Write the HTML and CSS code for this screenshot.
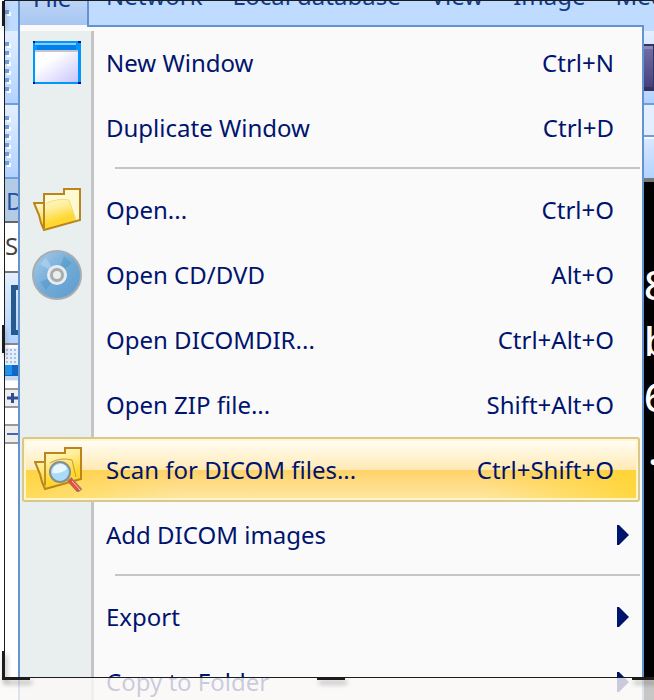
FILE: index.html
```html
<!DOCTYPE html>
<html lang="en">
<head>
<meta charset="utf-8">
<title>File menu</title>
<link rel="stylesheet" href="styles.css">
</head>
<body>
<div class="app">
  <nav class="menubar" aria-label="Main menu">
    <span class="grip grip-bar"></span>
    <button class="tab tab-open" type="button"><span>File</span></button>
    <div class="tabs">
      <button class="tab" type="button">Network</button>
      <button class="tab" type="button">Local database</button>
      <button class="tab" type="button">View</button>
      <button class="tab" type="button">Image</button>
      <button class="tab" type="button">Media</button>
    </div>
  </nav>
  <div class="workspace">
    <aside class="side">
      <div class="bar-end"></div>
      <div class="tool"><span class="grip"></span></div>
      <div class="tool"><span class="grip"></span></div>
      <div class="heading">D</div>
      <div class="search">S</div>
      <div class="device"><span></span></div>
      <div class="thumb">
        <svg width="13" height="33" viewBox="0 0 13 33"><rect width="13" height="33" fill="#e6effc"/><path d="M1 2h11M1 6h11M1 10h11M1 14h11" stroke="#a9bfe8" stroke-width="2" stroke-dasharray="2 2"/><rect y="17" width="13" height="13" fill="#1266c4"/><path d="M0 17h7v10H0z" fill="#1e90ee"/><path d="M0 30h13" stroke="#c6d8ef" stroke-width="4"/></svg>
      </div>
      <div class="node"><svg width="13" height="16" viewBox="0 0 13 16"><path d="M2 8h11M7.500 3v10" stroke="#2f4b94" stroke-width="3"/></svg></div>
      <div class="node"><svg width="13" height="16" viewBox="0 0 13 16"><path d="M2 8h11" stroke="#4565ad" stroke-width="2"/></svg></div>
    </aside>
    <div class="menu" role="menu">
      <button class="item" type="button" role="menuitem">
        <span class="icon"><svg width="48" height="43" viewBox="0 0 48 43"><defs><linearGradient id="win" x1="0" y1="0" x2="1" y2="1"><stop offset=".3" stop-color="#fff"/><stop offset="1" stop-color="#c9c5fb"/></linearGradient></defs><rect width="48" height="43" fill="#0096ff"/><path d="M2 2h41v2H2z" fill="#8ccdff"/><path d="M4 4h39v5H4z" fill="#0080ea"/><path d="M2 9h43v2H2z" fill="#c6c3cf"/><path d="M2 11h43v30H2z" fill="url(#win)"/><path d="M0 0h2v2H0zM45 0h3v2h-3zM0 41h2v2H0zM45 41h3v2h-3z" fill="#001883"/></svg></span>
        <span class="label">New Window</span><kbd>Ctrl+N</kbd>
      </button>
      <button class="item" type="button" role="menuitem"><span class="icon"></span><span class="label">Duplicate Window</span><kbd>Ctrl+D</kbd></button>
      <hr>
      <button class="item" type="button" role="menuitem">
        <span class="icon"><svg width="48" height="43" viewBox="0 0 48 43"><defs><linearGradient id="gold" x1="0" y1="0" x2=".4" y2="1"><stop offset="0" stop-color="#fffde5"/><stop offset=".4" stop-color="#ffee9c"/><stop offset=".8" stop-color="#ffd72e"/></linearGradient></defs><path d="M11 36V6h20V1h16v31L11 42z" fill="#fff9d2"/><path d="M1 15h10l1-1Q26 10 36 12l7 20-32 10L8 35 6 27z" fill="url(#gold)"/><path d="M11 40V6h20V1h16v31L11 42 8 35 6 27 1 15h10" fill="none" stroke="#b9851c" stroke-width="2"/><path d="M14 15q11-5 22-3l7 20" fill="none" stroke="#f4dd78" stroke-width="1"/></svg></span>
        <span class="label">Open...</span><kbd>Ctrl+O</kbd>
      </button>
      <button class="item" type="button" role="menuitem">
        <span class="icon"><svg width="52" height="52" viewBox="0 0 52 52"><defs><linearGradient id="disc" x1="0" y1="0" x2="1" y2="1"><stop offset="0" stop-color="#a9cdec"/><stop offset=".5" stop-color="#72acd8"/><stop offset="1" stop-color="#5b9bcc"/></linearGradient></defs><circle cx="26" cy="26" r="24" fill="url(#disc)" stroke="#a8adb1" stroke-width="2"/><path d="M26 26L33 7l8 7zM26 26L9 33l6 8z" fill="#498dbe" opacity=".4"/><path d="M26 26L9 15l6-6z" fill="#d6eafa" opacity=".35"/><circle cx="26" cy="26" r="9" fill="#dfe7ec" stroke="#e9eef0" stroke-width="2"/><circle cx="26" cy="26" r="5.500" fill="#e8eeee" stroke="#a9abad" stroke-width="3"/></svg></span>
        <span class="label">Open CD/DVD</span><kbd>Alt+O</kbd>
      </button>
      <button class="item" type="button" role="menuitem"><span class="icon"></span><span class="label">Open DICOMDIR...</span><kbd>Ctrl+Alt+O</kbd></button>
      <button class="item" type="button" role="menuitem"><span class="icon"></span><span class="label">Open ZIP file...</span><kbd>Shift+Alt+O</kbd></button>
      <button class="item item-active" type="button" role="menuitem">
        <span class="icon"><svg width="48" height="45" viewBox="0 0 48 45"><path d="M11 38V6h20V1h16v31L11 42 8 35 6 27 1 15h10" fill="url(#gold)" stroke="#b9851c" stroke-width="2"/><path d="M11 14v27M16 16q10-6 22-3l4 17" fill="none" stroke="#c79b34" stroke-width="1"/><path d="M35 32l11 12" stroke="#9c7d76" stroke-width="6"/><path d="M36 33l9 10" stroke="#f5472c" stroke-width="4"/><path d="M38 34l8 9" stroke="#fdd0bb" stroke-width="1"/><circle cx="26" cy="25" r="10" fill="#aadcf9" stroke="#858c92" stroke-width="2"/><path d="M18 26q0-8 8-9 6 0 7 5-5 5-15 4z" fill="#e8f8ff"/></svg></span>
        <span class="label">Scan for DICOM files...</span><kbd>Ctrl+Shift+O</kbd>
      </button>
      <button class="item" type="button" role="menuitem"><span class="icon"></span><span class="label">Add DICOM images</span><svg class="arrow" width="12" height="20" viewBox="0 0 12 20"><path d="M0 0h2l10 10L2 20H0z"/></svg></button>
      <hr>
      <button class="item" type="button" role="menuitem"><span class="icon"></span><span class="label">Export</span><svg class="arrow" width="12" height="20" viewBox="0 0 12 20"><path d="M0 0h2l10 10L2 20H0z"/></svg></button>
      <button class="item" type="button" role="menuitem"><span class="icon"></span><span class="label">Copy to Folder</span><svg class="arrow" width="12" height="20" viewBox="0 0 12 20"><path d="M0 0h2l10 10L2 20H0z"/></svg></button>
    </div>
    <div class="viewer">
      <div class="bar-end"></div>
      <div class="swatch"><span></span></div>
      <div class="field"></div>
      <div class="strip"></div>
      <div class="overlay-text"><span>8</span><span>b</span><span>6</span><span class="dot">·</span></div>
    </div>
  </div>
  <div class="frame">
    <i class="handle top-left"></i><i class="handle left"></i><i class="handle corner-v"></i><i class="handle corner-h"></i><i class="handle bottom"></i><i class="handle bottom-right"></i>
  </div>
  <div class="fade"></div>
</div>
</body>
</html>
```
FILE: styles.css
```css
* { box-sizing: border-box; }
body { margin: 0; background: #fff; }
button { border: 0; background: none; padding: 0; color: inherit; font: inherit; text-align: left; white-space: nowrap; }
svg { display: block; }

.app {
  position: relative;
  height: 100vh;
  overflow: hidden;
  padding-left: 5px;
  display: flex;
  flex-direction: column;
  font: 24px/32px "Noto Sans", sans-serif;
  color: #00146e;
}

.menubar { flex: none; display: flex; height: 25px; background: #bfdbff; color: #123a86; }
.grip {
  display: block;
  width: 6px;
  height: 52px;
  background:
    repeating-linear-gradient(#6f9ddc 0 4px, transparent 4px 9px) 0 0 / 4px 52px no-repeat,
    repeating-linear-gradient(transparent 0 2px, #fff 2px 6px, transparent 6px 9px) 2px 0 / 4px 52px no-repeat;
}
.grip-bar { flex: none; height: 6px; margin: 10px 7px 0 0; }
.tab { flex: none; display: block; }
.tab > span { display: block; margin-top: -30px; }
.tabs .tab { margin-top: -20px; }
.tab-open {
  width: 71px;
  padding-left: 13px;
  height: 25px;
  border: solid #6593cf;
  border-width: 0 2px;
  background: linear-gradient(#bdd4f5, #a6c6f2);
}
.tabs { flex: 1; min-width: 0; overflow: hidden; display: flex; gap: 30px; padding-left: 17px; align-items: flex-start; }

.workspace { flex: none; display: grid; grid-template-columns: 13px minmax(0, 1fr) 10px; }

.side { overflow: hidden; background: #fff; }
.bar-end { height: 6px; background: #bfdbff; }
.tool { height: 74px; padding-top: 11px; border-bottom: 2px solid #6f9ddc; background: linear-gradient(#e3efff, #b1d2ff); }
.heading { height: 44px; padding: 6px 0 0 1px; border-bottom: 2px solid #666; background: #b4cbe6; color: #2450a4; }
.search { height: 50px; padding-top: 7px; border-bottom: 2px solid #777; color: #444; }
.device { height: 72px; padding: 12px 0 0 6px; border-bottom: 2px solid #888; background: linear-gradient(#e3efff, #b1d2ff); }
.device span { display: block; width: 14px; height: 50px; border: 5px solid #265a8e; }
.thumb { height: 43px; padding-top: 3px; }
.node { height: 20px; margin-bottom: 16px; border: solid #999; border-width: 2px 0; background: #eee; }

.menu { border: solid #6593cf; border-width: 0 2px; padding-top: 5px; background: linear-gradient(90deg, #e9eeee 71px, #c5c5c5 71px, #c5c5c5 74px, #fafafa 74px); position: relative; }
.menu::before { content: ""; position: absolute; inset: 0 0 auto; height: 6px; background: #fafafa; }
.menu::after { content: ""; position: absolute; top: 0; left: 67px; right: 0; height: 2px; background: #6593cf; }
.item { display: flex; align-items: center; width: 100%; height: 65px; padding-right: 28px; }
.icon { flex: none; width: 86px; display: flex; justify-content: center; padding-right: 12px; }
.label { flex: 1; }
kbd { font: inherit; }
.arrow { fill: #00146e; margin-right: -15px; }
hr { height: 2px; margin: 7px 2px 8px 95px; border: 0; background: #c5c5c5; }
.item-active {
  margin: 0 2px;
  width: calc(100% - 4px);
  padding-right: 24px;
  border: 2px solid #d8c88c;
  border-radius: 3px;
  box-shadow: inset 0 0 0 2px #fff6cc;
  background:
    linear-gradient(90deg, rgba(255, 212, 40, .6), transparent 25%, transparent 75%, rgba(255, 212, 40, .8)) 0 100% / 100% 50% no-repeat,
    linear-gradient(#fffef8, #ffeab4 50%, #ffd268 50%, #ffe7a4);
}
.item-active .icon { width: 82px; padding-right: 14px; }

.viewer { overflow: hidden; background: #000; color: #fff; }
.swatch { height: 74px; padding-top: 13px; border-bottom: 2px solid #6f9ddc; background: linear-gradient(#e3efff, #b1d2ff); }
.swatch span { display: block; height: 47px; border: solid #35325f; border-width: 2px 1px 4px 0; background: linear-gradient(#8b88b5 3px, #6f6ba5 3px, #45417c); }
.field { height: 32px; border-bottom: 2px solid #6f9ddc; background: #e3eeff; }
.strip { height: 45px; border-top: 2px solid #f5f9ff; border-bottom: 4px solid #777; background: linear-gradient(#d7e7ff, #b1d2ff); }
.overlay-text { display: grid; grid-auto-rows: 56px; padding-top: 75px; font-size: 40px; font-weight: 500; line-height: 56px; }
.dot { padding: 8px 0 0 4px; }

.frame { position: absolute; z-index: 2; inset: 0 0 22px 4px; border: solid #1c1c1c; border-width: 1px 0 1px 1px; pointer-events: none; }
.handle { position: absolute; background: #1c1c1c; box-shadow: 2px 4px 5px rgba(0, 0, 0, .3); }
.top-left { top: 0; left: -3px; width: 2px; height: 25px; }
.left { top: 324px; left: -3px; width: 2px; height: 28px; }
.corner-v { bottom: -2px; left: -3px; width: 3px; height: 28px; }
.corner-h { bottom: -3px; left: -3px; width: 28px; height: 3px; }
.bottom { bottom: -3px; left: 312px; width: 28px; height: 3px; }
.bottom-right { bottom: -3px; right: 0; width: 22px; height: 3px; }
.fade { position: absolute; inset: auto 0 0; height: 22px; background: rgba(251, 249, 247, .8); }
```
